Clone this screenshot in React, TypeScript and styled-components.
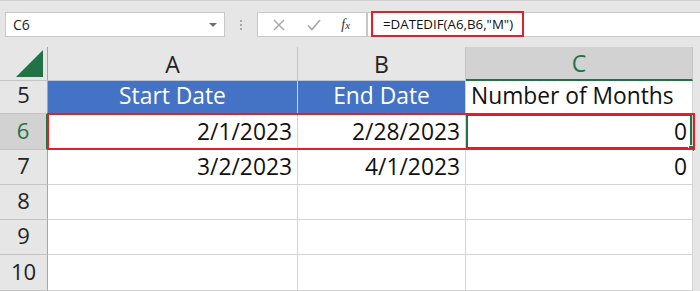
import React from "react";
import styled, { createGlobalStyle } from "styled-components";

const GlobalStyle = createGlobalStyle`
  html, body {
    margin: 0;
    padding: 0;
    background: #e6e6e6;
  }
  body {
    font-family: "Open Sans", "Liberation Sans", sans-serif;
  }
`;

const Page = styled.div`
  width: 700px;
  height: 291px;
  overflow: hidden;
  background: #e6e6e6;
  border-top: 1px solid #cfcfcf;
  box-sizing: border-box;
  position: relative;
`;

// formula bar
const Toolbar = styled.div`
  display: flex;
  align-items: center;
  height: 46px;
  padding-left: 5px;
  box-sizing: border-box;
  padding-top: 1px;
`;

const NameBox = styled.div`
  width: 220px;
  height: 25px;
  box-sizing: border-box;
  background: #fff;
  border: 1px solid #c8c8c8;
  display: flex;
  align-items: center;
  justify-content: space-between;
  padding: 0 7px 0 7px;
  font-size: 14px;
  color: #222;
`;

const Caret = styled.span`
  width: 0;
  height: 0;
  border-left: 4px solid transparent;
  border-right: 4px solid transparent;
  border-top: 4px solid #6e6e6e;
`;

const Grip = styled.div`
  width: 32px;
  display: flex;
  flex-flow: column;
  align-items: center;
  gap: 2px;
  span {
    width: 2px;
    height: 2px;
    background: #a8a8a8;
  }
`;

const FxBox = styled.div`
  width: 110px;
  height: 25px;
  box-sizing: border-box;
  background: #fff;
  border: 1px solid #c8c8c8;
  display: flex;
  align-items: center;
  justify-content: space-around;
  padding: 0 6px 0 4px;
`;

const Fx = styled.span`
  font-family: "Liberation Serif", serif;
  font-style: italic;
  font-size: 14px;
  color: #333;
`;

const FormulaInput = styled.div`
  flex: 1;
  height: 25px;
  box-sizing: border-box;
  background: #fff;
  border-top: 1px solid #c8c8c8;
  border-bottom: 1px solid #c8c8c8;
  border-left: 1px solid #c8c8c8;
  display: flex;
  align-items: center;
  padding-left: 3px;
`;

const Highlight = styled.span`
  height: 26px;
  box-sizing: border-box;
  border: 2px solid #e0202a;
  display: flex;
  align-items: center;
  padding: 0 9px 0 10px;
  font-size: 13.3px;
  color: #111;
  margin-top: -1px;
`;

// sheet grid
const Sheet = styled.div`
  display: grid;
  grid-template-columns: 48px 250px 168px 227px 7px;
  grid-template-rows: 34px 33px 36px 35px 35px 35px 36px;
  position: relative;
`;

const Cell = styled.div<{ $align?: "left" | "center" | "right"; $fill?: string; $light?: boolean }>`
  box-sizing: border-box;
  border-right: 1px solid #d4d4d4;
  border-bottom: 1px solid #d4d4d4;
  background: ${(p) => p.$fill || "#fff"};
  color: ${(p) => (p.$light ? "#fff" : "#111")};
  font-size: 22.8px;
  line-height: 1;
  display: flex;
  align-items: flex-end;
  justify-content: ${(p) =>
    p.$align === "center" ? "center" : p.$align === "right" ? "flex-end" : "flex-start"};
  padding: 0 5px 5px 5px;
  white-space: nowrap;
  position: relative;
`;

const SelectedCell = styled(Cell)`
  box-shadow: inset 0 0 0 2px #217346;
  &::after {
    content: "";
    position: absolute;
    right: -3px;
    bottom: -3px;
    width: 5px;
    height: 5px;
    background: #217346;
    border: 1px solid #fff;
  }
`;

const ColHead = styled.div<{ $active?: boolean }>`
  box-sizing: border-box;
  border-right: 1px solid #c4c4c4;
  border-bottom: ${(p) => (p.$active ? "2px solid #217346" : "1px solid #c4c4c4")};
  background: ${(p) => (p.$active ? "#d2d2d2" : "#e6e6e6")};
  color: ${(p) => (p.$active ? "#217346" : "#222")};
  font-size: 23px;
  display: flex;
  align-items: center;
  justify-content: center;
`;

const RowHead = styled.div<{ $active?: boolean }>`
  box-sizing: border-box;
  border-right: ${(p) => (p.$active ? "2px solid #217346" : "1px solid #a6a6a6")};
  border-bottom: 1px solid #c4c4c4;
  background: ${(p) => (p.$active ? "#d2d2d2" : "#e6e6e6")};
  color: ${(p) => (p.$active ? "#217346" : "#222")};
  font-size: 22px;
  display: flex;
  align-items: flex-end;
  justify-content: center;
  padding-bottom: 4px;
`;

const Corner = styled.div`
  box-sizing: border-box;
  border-right: 1px solid #a6a6a6;
  border-bottom: 1px solid #c4c4c4;
  display: flex;
  align-items: flex-end;
  justify-content: flex-end;
  padding: 0 4px 3px 0;
`;

const Filler = styled.div`
  background: #e6e6e6;
`;

const BottomEdge = styled.div`
  grid-column: 1 / 5;
  border-top: 1px solid #a8a8a8;
`;

const Annotation = styled.div`
  position: absolute;
  left: 47px;
  top: 66px;
  width: 648px;
  height: 37px;
  box-sizing: border-box;
  border: 2px solid #e0202a;
  pointer-events: none;
`;

const rows = [
  { n: 6, a: "2/1/2023", b: "2/28/2023", c: "0" },
  { n: 7, a: "3/2/2023", b: "4/1/2023", c: "0" },
  { n: 8, a: "", b: "", c: "" },
  { n: 9, a: "", b: "", c: "" },
  { n: 10, a: "", b: "", c: "" },
];

const App = () => {
  return (
    <Page>
      <GlobalStyle />
      <Toolbar>
        <NameBox>
          C6
          <Caret />
        </NameBox>
        <Grip>
          <span />
          <span />
          <span />
        </Grip>
        <FxBox>
          <svg width="14" height="14" viewBox="0 0 14 14">
            <path d="M2 2 L12 12 M12 2 L2 12" stroke="#a6a6a6" strokeWidth="1.4" fill="none" />
          </svg>
          <svg width="16" height="14" viewBox="0 0 16 14">
            <path d="M2 7.5 L6 11.5 L14 2" stroke="#a6a6a6" strokeWidth="1.6" fill="none" />
          </svg>
          <Fx>
            f<span style={{ fontSize: 11 }}>x</span>
          </Fx>
        </FxBox>
        <FormulaInput>
          <Highlight>=DATEDIF(A6,B6,"M")</Highlight>
        </FormulaInput>
      </Toolbar>
      <Sheet>
        <Corner>
          <svg width="27" height="27" viewBox="0 0 27 27">
            <polygon points="27,0 27,27 0,27" fill="#217346" />
          </svg>
        </Corner>
        <ColHead>A</ColHead>
        <ColHead>B</ColHead>
        <ColHead $active>C</ColHead>
        <Filler />

        <RowHead>5</RowHead>
        <Cell $align="center" $fill="#4472c4" $light>
          Start Date
        </Cell>
        <Cell $align="center" $fill="#4472c4" $light>
          End Date
        </Cell>
        <Cell $align="left">Number of Months</Cell>
        <Filler />

        {rows.map((r) => (
          <React.Fragment key={r.n}>
            <RowHead $active={r.n === 6}>{r.n}</RowHead>
            <Cell $align="right">{r.a}</Cell>
            <Cell $align="right">{r.b}</Cell>
            {r.n === 6 ? (
              <SelectedCell $align="right">{r.c}</SelectedCell>
            ) : (
              <Cell $align="right">{r.c}</Cell>
            )}
            <Filler />
          </React.Fragment>
        ))}
        <BottomEdge />
        <Annotation />
      </Sheet>
    </Page>
  );
};

export default App;
